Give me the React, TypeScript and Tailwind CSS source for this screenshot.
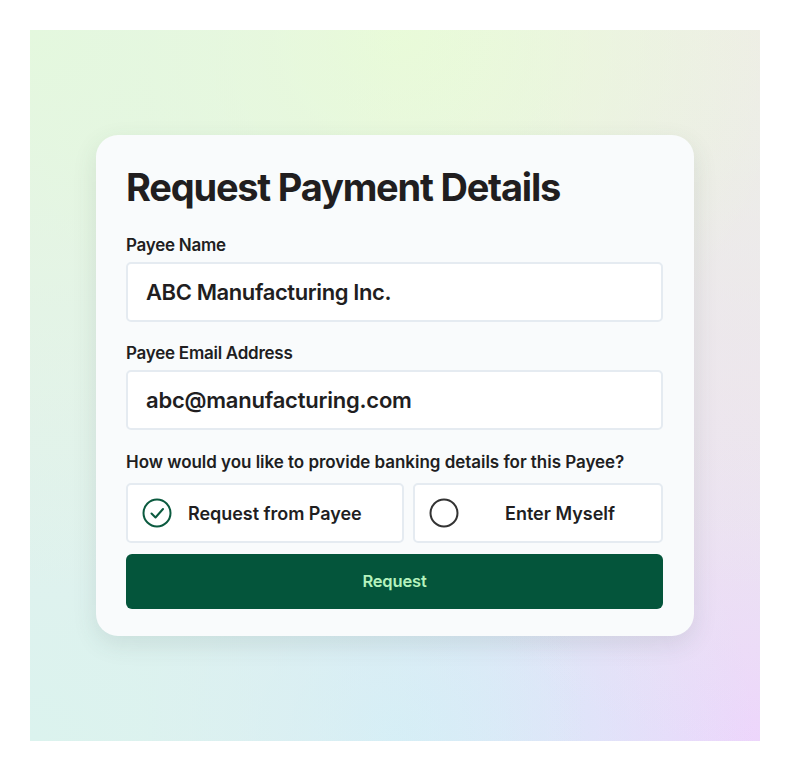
import { useState } from 'react';

type Mode = 'payee' | 'self';

function RadioMark({ checked }: { checked: boolean }) {
  if (checked) {
    return (
      <svg width="30" height="30" viewBox="0 0 30 30" className="shrink-0">
        <circle cx="15" cy="15" r="13.5" fill="none" stroke="#0b5a3f" strokeWidth="2" />
        <path d="M9.5 15.5l4 4 7.5-8.5" fill="none" stroke="#0b5a3f" strokeWidth="2" strokeLinecap="round" strokeLinejoin="round" />
      </svg>
    );
  }
  return (
    <svg width="30" height="30" viewBox="0 0 30 30" className="shrink-0">
      <circle cx="15" cy="15" r="13.5" fill="none" stroke="#333333" strokeWidth="2" />
    </svg>
  );
}

export default function App() {
  const [mode, setMode] = useState<Mode>('payee');

  return (
    <div className="w-[790px] h-[771px] bg-white p-[30px] font-['Inter','Liberation_Sans',sans-serif] text-[#211e1f]">
      <div className="w-[730px] h-[711px] flex items-center justify-center bg-[#e6efee] bg-[radial-gradient(circle_at_0%_0%,#e4f8de,transparent_55%),radial-gradient(circle_at_50%_0%,#ebfcd6,transparent_50%),radial-gradient(circle_at_100%_0%,#eeede6,transparent_55%),radial-gradient(circle_at_100%_50%,#ece3f0,transparent_45%),radial-gradient(circle_at_0%_100%,#dbf3ee,transparent_55%),radial-gradient(circle_at_50%_100%,#d3ecfa,transparent_45%),radial-gradient(circle_at_100%_100%,#edd5fc,transparent_60%)]">
        <div className="w-[598px] h-[501px] rounded-[22px] bg-[#f9fbfc] shadow-[0_8px_24px_rgba(60,80,70,0.12)] pl-[30px] pr-[31px] pt-[30px]">
          <h1 className="h-[44px] leading-[44px] text-[38px] font-bold tracking-[-0.032em]">Request Payment Details</h1>

          <label className="block mt-[26px] h-[20px] leading-[20px] text-[17px] font-semibold tracking-[-0.015em]">Payee Name</label>
          <div className="mt-[7px] h-[60px] rounded-[5px] border-2 border-[#e5ebf1] bg-white flex items-center px-[18px] text-[22px] font-semibold tracking-[-0.018em]">
            ABC Manufacturing Inc.
          </div>

          <label className="block mt-[21px] h-[20px] leading-[20px] text-[17px] font-semibold tracking-[-0.015em]">Payee Email Address</label>
          <div className="mt-[7px] h-[60px] rounded-[5px] border-2 border-[#e5ebf1] bg-white flex items-center px-[18px] text-[22px] font-semibold tracking-[-0.01em]">
            abc@manufacturing.com
          </div>

          <p className="mt-[22px] h-[20px] leading-[20px] text-[17px] font-semibold tracking-[-0.002em]">
            How would you like to provide banking details for this Payee?
          </p>

          <div className="mt-[11px] flex gap-[9px]">
            <button
              type="button"
              onClick={() => setMode('payee')}
              className="w-[278px] h-[60px] rounded-[5px] border-2 border-[#e5ebf1] bg-white flex items-center pl-[14px] gap-[16px] text-[18px] font-semibold tracking-[-0.002em]"
            >
              <RadioMark checked={mode === 'payee'} />
              <span>Request from Payee</span>
            </button>
            <button
              type="button"
              onClick={() => setMode('self')}
              className="flex-1 h-[60px] rounded-[5px] border-2 border-[#e5ebf1] bg-white flex items-center pl-[14px] text-[18px] font-semibold tracking-[0em]"
            >
              <RadioMark checked={mode === 'self'} />
              <span className="flex-1 text-center">Enter Myself</span>
            </button>
          </div>

          <button
            type="button"
            className="mt-[11px] w-full h-[55px] rounded-[6px] bg-[#04553b] text-[#b5f2bd] text-[16.5px] font-semibold tracking-[-0.01em]"
          >
            Request
          </button>
        </div>
      </div>
    </div>
  );
}
